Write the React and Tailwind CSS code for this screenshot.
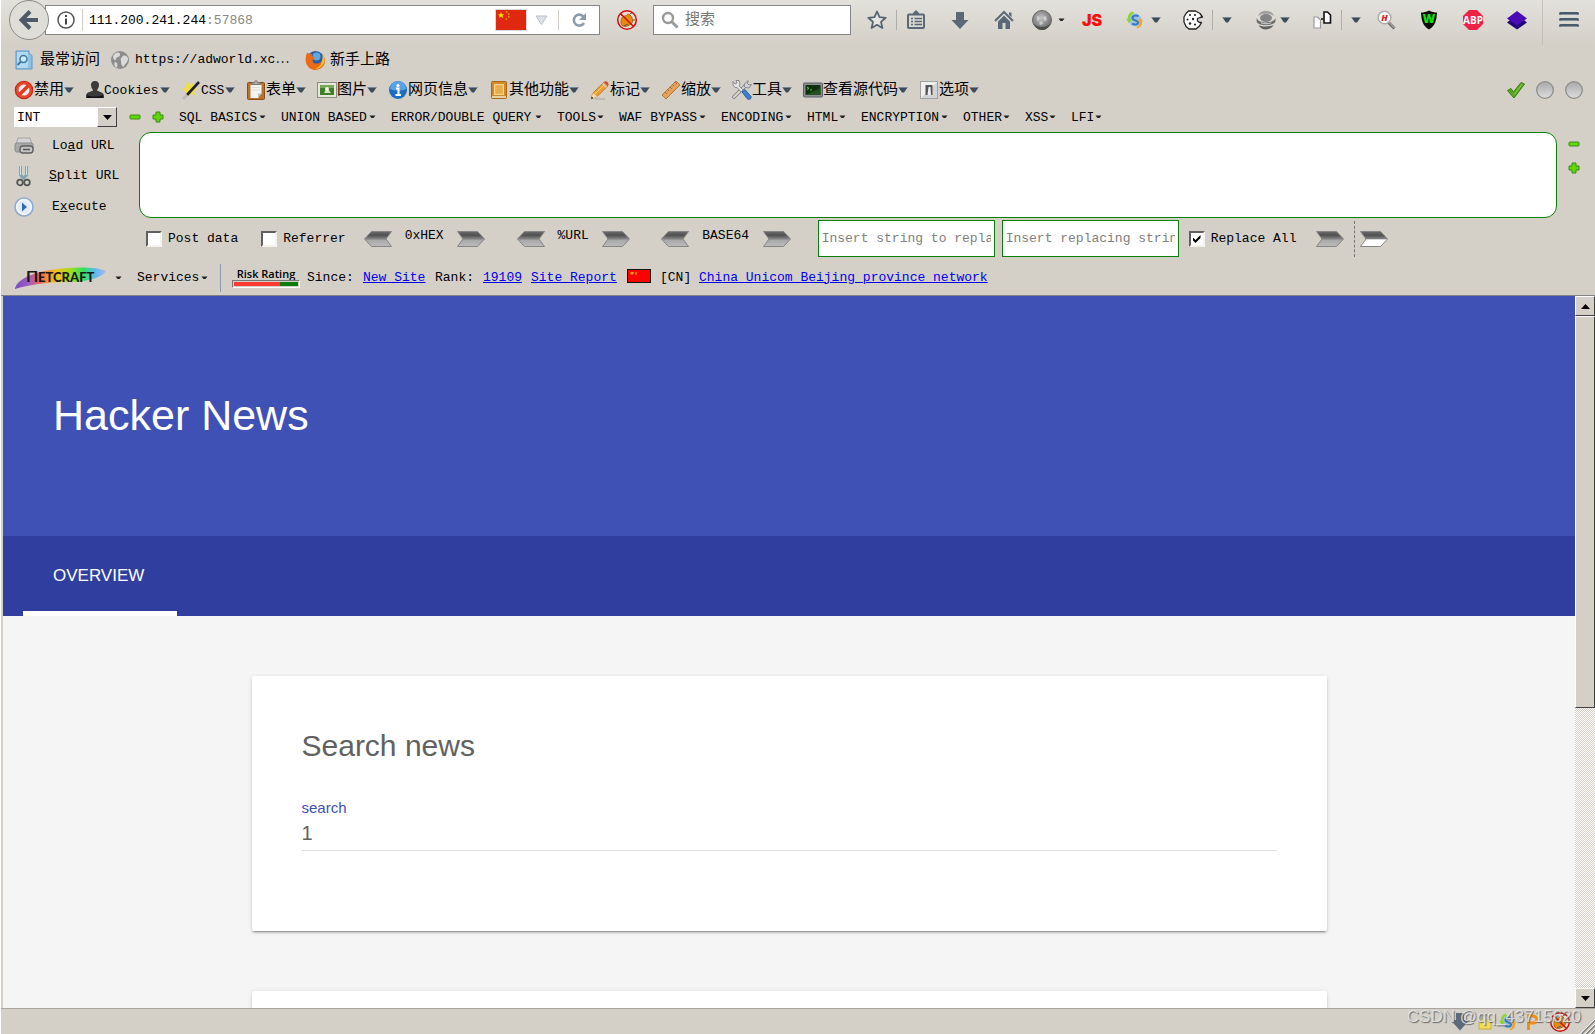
import React from "react";

/* ---------- small shared glyphs ---------- */

const Caret = ({ className = "" }) => (
  <svg className={`shrink-0 ${className}`} width="10" height="6" viewBox="0 0 10 6" aria-hidden="true">
    <path d="M0.5 0.5h9L6 5.5H4z" fill="#3d4b5a" />
    <path d="M0.5 0.5h9" stroke="#7b8794" strokeWidth="1" />
  </svg>
);

const TinyCaret = ({ className = "" }) => (
  <svg className={`shrink-0 ${className}`} width="7" height="4" viewBox="0 0 7 4" aria-hidden="true">
    <path d="M0.5 0.5h6L4.5 3h-2z" fill="#222" />
  </svg>
);

const Minus = () => (
  <svg width="12" height="12" viewBox="0 0 12 12" aria-hidden="true">
    <rect x="1" y="4" width="10" height="4" rx="1" fill="#5ed80a" stroke="#3c8a12" />
  </svg>
);

const Plus = () => (
  <svg width="12" height="12" viewBox="0 0 12 12" aria-hidden="true">
    <path d="M4 1h4v3h3v4H8v3H4V8H1V4h3z" fill="#5ed80a" stroke="#3c8a12" strokeLinejoin="round" />
  </svg>
);

const Wedge = ({ left, pale }) => (
  <svg width="28" height="16" viewBox="0 0 28 16" aria-hidden="true">
    <defs>
      <linearGradient id="wedge" x1="0" y1="0" x2="0" y2="1">
        <stop offset="0" stopColor="#6c6c6c" />
        <stop offset="0.25" stopColor="#505050" />
        <stop offset="0.52" stopColor="#8a8a8a" />
        <stop offset="0.56" stopColor="#a8a8a8" />
        <stop offset="1" stopColor="#bcbcbc" />
      </linearGradient>
      <linearGradient id="wedgePale" x1="0" y1="0" x2="0" y2="1">
        <stop offset="0" stopColor="#6c6c6c" />
        <stop offset="0.25" stopColor="#505050" />
        <stop offset="0.52" stopColor="#8a8a8a" />
        <stop offset="0.54" stopColor="#ffffff" />
        <stop offset="1" stopColor="#ffffff" />
      </linearGradient>
    </defs>
    <path
      d={left ? "M27.5 0.5H7.5L0.5 8l7 7.5h20L22 8z" : "M0.5 0.5h20L27.5 8l-7 7.5h-20L6 8z"}
      fill={pale ? "url(#wedgePale)" : "url(#wedge)"}
      stroke="#858585"
    />
  </svg>
);

const NoBug = () => (
  <svg width="22" height="22" viewBox="0 0 22 22" aria-hidden="true">
    <circle cx="11" cy="11" r="9.3" fill="#e4dcd0" />
    <path d="M6 9c1-3 4-1 5-3s4 0 5 3 1 4-1 6-6 3-8 2-3-5-1-8z" fill="#e88a12" stroke="#a8660e" />
    <path d="M14 5l3-2M6 7L4 5M17 11h2M8 17l4-2" stroke="#555" />
    <circle cx="11" cy="11" r="9.3" fill="none" stroke="#cf1010" strokeWidth="1.5" />
    <path d="M4.5 4.5l13 13" stroke="#cf1010" strokeWidth="1.5" />
  </svg>
);

const SwirlIcon = () => (
  <svg width="20" height="20" viewBox="0 0 20 20" aria-hidden="true">
    <circle cx="10" cy="10" r="6.5" fill="#9cc4e8" />
    <path d="M13.5 6.5C11 4.5 7 6 7.5 8.5s5.5 1.5 5.5 4-4 2.5-6 1" fill="none" stroke="#3a78b8" strokeWidth="2" />
    <path d="M8 1.5C4 2.5 2.5 5 3 9L1 8l2.5 5L7 10 5 9.500C5 6 6 4.500 9 3.500z" fill="#8ed62a" />
    <path d="M12 18.5c4-1 5.500-3.500 5-7.500l1.500 1L16 8l-3.500 3 2 .5c0 3-.5 4.500-3 5.500z" fill="#f2a52c" />
  </svg>
);

/* ---------- navigation toolbar icons ---------- */

const slate = "#5a6878";

const StarIcon = () => (
  <svg width="20" height="20" viewBox="0 0 20 20" aria-hidden="true">
    <path d="M10 1.5l2.500 5.700 6.200.6-4.700 4.100 1.400 6.100L10 14.800 4.600 18 6 11.900 1.300 7.800l6.200-.6z" fill="#e6e4df" stroke="#566474" strokeWidth="1.8" strokeLinejoin="round" />
  </svg>
);
const ListIcon = () => (
  <svg width="20" height="20" viewBox="0 0 20 20" aria-hidden="true">
    <path d="M10 0l3 3v2H7V3z" fill={slate} />
    <rect x="2" y="4.5" width="16" height="13.5" rx="1" fill="none" stroke={slate} strokeWidth="2" />
    <path d="M5 8.5h2M8.5 8.5H16M5 11.5h2M8.5 11.5H16M5 14.5h2M8.5 14.5H16" stroke={slate} strokeWidth="1.6" />
  </svg>
);
const DownIcon = () => (
  <svg width="20" height="20" viewBox="0 0 20 20" aria-hidden="true">
    <path d="M6 2h8v8h4.5L10 19 1.5 10H6z" fill={slate} />
  </svg>
);
const HomeIcon = () => (
  <svg width="20" height="20" viewBox="0 0 20 20" aria-hidden="true">
    <path d="M1 11l9-9 9 9" fill="none" stroke={slate} strokeWidth="2" />
    <path d="M15 2.5h2.5V7L15 5zM4 11.5l6-6 6 6V19h-4.5v-6h-3v6H4z" fill={slate} />
  </svg>
);
const GlobeIcon = () => (
  <svg width="20" height="20" viewBox="0 0 20 20" aria-hidden="true">
    <defs>
      <radialGradient id="orb" cx="0.45" cy="0.4" r="0.6">
        <stop offset="0" stopColor="#c4c4c4" /><stop offset="1" stopColor="#6a6a6a" />
      </radialGradient>
    </defs>
    <circle cx="10" cy="10" r="9.5" fill="url(#orb)" stroke="#6a6a6a" />
    <path d="M5 6l3 1-1 3-2 1zM11 7l3-1 1 4-3 1zM7 12l3-1 1 3-3 1z" fill="#d6d6d6" opacity="0.8" />
    <path d="M2 14c4 4 12 4 16 0-3 8-13 8-16 0z" fill="#4e4e4e" />
  </svg>
);
const JsIcon = () => (
  <svg width="22" height="20" viewBox="0 0 22 20" aria-hidden="true">
    <text x="11" y="16" textAnchor="middle" fontFamily="Inter, sans-serif" fontWeight="900" fontSize="16" fill="#fa0d0d">JS</text>
  </svg>
);
const CookieIcon = () => (
  <svg width="20" height="20" viewBox="0 0 20 20" aria-hidden="true">
    <path d="M5.5 1h7L17 3.5l2.5 3.5-2.5.5-2.5 1 0 2.5 2 1.5 2 0-2 3.5L13 19H6l-3-2.5L1 12V7l2-3.5z" fill="#fff" stroke="#222" strokeWidth="1.3" strokeLinejoin="round" />
    <g fill="#222">
      <circle cx="7" cy="5" r="1.1" /><circle cx="12" cy="5" r="1.1" /><circle cx="4.5" cy="9.5" r="1" />
      <circle cx="10" cy="9" r="1.2" /><circle cx="7" cy="13.5" r="1.2" />
      <circle cx="12" cy="14.5" r="1.1" />
    </g>
  </svg>
);
const SphereIcon = () => (
  <svg width="20" height="20" viewBox="0 0 20 20" aria-hidden="true">
    <path d="M2 6C4-1 16-1 18 6c-4-3-12-3-16 0z" fill="#a2a2a2" />
    <ellipse cx="10" cy="8" rx="6" ry="4" fill="#858585" />
    <path d="M0.5 8c2 6 17 6 19 0 0 3 0 4-1 5-4 3-13 3-17 0-1-1-1-2-1-5z" fill="#6e6e6e" />
    <path d="M2.5 15c4 2 11 2 15 0-3 6-12 6-15 0z" fill="#5f5f5f" />
    <path d="M5 12.7c3 1.5 7 1.5 10 0" stroke="#d5d5d5" fill="none" />
  </svg>
);
const PagesIcon = () => (
  <svg width="20" height="20" viewBox="0 0 20 20" aria-hidden="true">
    <path d="M2 7h3.5L8.5 10v8H2z" fill="#fff" stroke="#9a9a9a" strokeWidth="1.2" />
    <path d="M12 2h3.5L18.5 5v8H12z" fill="#fff" stroke="#111" strokeWidth="1.6" />
    <path d="M9 9h2.5" stroke="#111" strokeWidth="1.5" />
  </svg>
);
const HSearchIcon = () => (
  <svg width="20" height="20" viewBox="0 0 20 20" aria-hidden="true">
    <path d="M11 12l6.5 6.5" stroke="#6a6a6a" strokeWidth="3" />
    <path d="M12 12.5l5.5 5.5" stroke="#c8c8c8" />
    <circle cx="7.5" cy="7.5" r="6.3" fill="#fff" stroke="#aaa" strokeWidth="1.5" />
    <text x="7.5" y="11" textAnchor="middle" fontFamily="Open Sans, sans-serif" fontWeight="800" fontStyle="italic" fontSize="9" fill="#e02626">H</text>
  </svg>
);
const ShieldIcon = () => (
  <svg width="20" height="20" viewBox="0 0 20 20" aria-hidden="true">
    <path d="M10 0.5c3 1.5 5 2 8 2-.5 8-1.5 13-8 17-6.5-4-7.5-9-8-17 3 0 5-.5 8-2z" fill="#0b0b0b" />
    <text x="10" y="13" textAnchor="middle" fontFamily="Open Sans, sans-serif" fontWeight="800" fontSize="12" fill="#0be80b">W</text>
  </svg>
);
const AbpIcon = () => (
  <svg width="20" height="20" viewBox="0 0 20 20" aria-hidden="true">
    <path d="M6 0h8l6 6v8l-6 6H6l-6-6V6z" fill="#ee2246" />
    <text x="10" y="14" textAnchor="middle" fontFamily="Open Sans, sans-serif" fontWeight="700" fontSize="10" fill="#fff">ABP</text>
  </svg>
);
const LayersIcon = () => (
  <svg width="20" height="20" viewBox="0 0 20 20" aria-hidden="true">
    <path d="M0 12.5l3-2.5h14l3 2.5L10 19.5z" fill="#24057a" />
    <path d="M10 1l10 7.5L10 15.5 0 8.5z" fill="#4a0cb4" />
  </svg>
);
const MenuIcon = () => (
  <svg width="20" height="20" viewBox="0 0 20 20" aria-hidden="true">
    <path d="M1.5 3.5h17M1.5 9.5h17M1.5 15.5h17" stroke="#4b5a6a" strokeWidth="3" strokeLinecap="round" />
    <path d="M1.5 4.5h17M1.5 10.5h17M1.5 16.5h17" stroke="#8593a2" strokeWidth="1" />
  </svg>
);

const Sep = ({ className = "" }) => <span className={`h-5 w-px shrink-0 bg-[#b0ada7] ${className}`} />;

const navItems = [
  { label: "Bookmark", icon: <StarIcon />, gap: "ml-4" },
  { sep: true, gap: "ml-[9px]" },
  { label: "Library", icon: <ListIcon />, gap: "ml-[9px]" },
  { label: "Downloads", icon: <DownIcon />, gap: "ml-6" },
  { label: "Home", icon: <HomeIcon />, gap: "ml-6" },
  { label: "Proxy", icon: <GlobeIcon />, gap: "ml-[18px]" },
  { label: "Proxy menu", icon: <TinyCaret />, gap: "ml-[6px]" },
  { label: "JavaScript", icon: <JsIcon />, gap: "ml-4" },
  { label: "Sync", icon: <SwirlIcon />, gap: "ml-[22px]" },
  { label: "Sync menu", icon: <Caret />, gap: "ml-[6px]" },
  { label: "Cookies manager", icon: <CookieIcon />, gap: "ml-[22px]" },
  { sep: true, gap: "ml-[9px]" },
  { label: "Cookies manager menu", icon: <Caret />, gap: "ml-[9px]" },
  { label: "Agent", icon: <SphereIcon />, gap: "ml-6" },
  { label: "Agent menu", icon: <Caret />, gap: "ml-1" },
  { label: "Pages", icon: <PagesIcon />, gap: "ml-[22px]" },
  { sep: true, gap: "ml-[9px]" },
  { label: "Pages menu", icon: <Caret />, gap: "ml-[9px]" },
  { label: "Header search", icon: <HSearchIcon />, gap: "ml-4" },
  { label: "Wappalyzer", icon: <ShieldIcon />, gap: "ml-[22px]" },
  { label: "Adblock Plus", icon: <AbpIcon />, gap: "ml-6" },
  { label: "Layers", icon: <LayersIcon />, gap: "ml-6" },
];

const CnFlag = () => (
  <svg className="shrink-0" width="32" height="22" viewBox="0 0 32 22" role="img" aria-label="China">
    <rect x="0.5" y="0.5" width="31" height="21" fill="#de2910" stroke="#d8d8d8" />
    <path d="M6 3l.9 2.2 2.3.1-1.8 1.5.6 2.3L6 7.8 4 9.1l.6-2.3L2.8 5.3l2.3-.1z" fill="#ffde00" />
    <path d="M11 2.5l1.5 1M13 5l1.5.5M13 8l1.5-.5M11 9.5l1 1" stroke="#e89a08" strokeWidth="1.5" />
  </svg>
);

function NavBar() {
  return (
    <div className="flex h-[45px] items-center bg-linear-to-b from-[#e3e1dc] to-[#d4d0c8] pr-4 pb-[5px] pl-2">
      <button aria-label="Back" className="z-10 flex size-10 shrink-0 items-center justify-center rounded-full border border-[#8a8a86] bg-[#dfddd8]">
        <svg width="20" height="20" viewBox="0 0 20 20" aria-hidden="true">
          <path d="M11 1.5L2.5 10l8.5 8.5M3 10h16" fill="none" stroke="#4d5a68" strokeWidth="4" />
        </svg>
      </button>
      <div className="-ml-1 flex h-[30px] min-w-0 flex-1 items-center border border-[#86868a] bg-white pr-3 pl-[11px]">
        <svg className="shrink-0" width="18" height="18" viewBox="0 0 18 18" aria-hidden="true">
          <circle cx="9" cy="9" r="8" fill="none" stroke="#555" strokeWidth="1.5" />
          <path d="M9 7.5v6M9 4v2" stroke="#444" strokeWidth="2" />
        </svg>
        <span className="ml-[7px] h-[22px] w-px shrink-0 bg-[#cfccc6]" />
        <div className="ml-[6px] min-w-0 flex-1 pt-px">
          111.200.241.244<span className="text-[#888]">:57868</span>
        </div>
        <CnFlag />
        <svg className="ml-2 shrink-0" width="13" height="11" viewBox="0 0 13 11" aria-hidden="true">
          <path d="M1 1h11L6.5 9.5z" fill="#dde3e8" stroke="#b9c0c8" />
        </svg>
        <span className="ml-[10px] h-5 w-px shrink-0 bg-[#cfccc6]" />
        <button aria-label="Reload" className="ml-3">
          <svg width="16" height="16" viewBox="0 0 16 16" aria-hidden="true">
            <path d="M12.5 4.5A5.5 5.5 0 1 0 13 11" fill="none" stroke="#8d9cab" strokeWidth="2.6" />
            <path d="M15 1v7H8z" fill="#8d9cab" />
          </svg>
        </button>
      </div>
      <button aria-label="Block" className="ml-4 shrink-0"><NoBug /></button>
      <label className="ml-[15px] flex h-[30px] w-[198px] shrink-0 items-center border border-[#86868a] bg-white pl-[7px]">
        <svg className="shrink-0" width="18" height="18" viewBox="0 0 18 18" aria-hidden="true">
          <circle cx="7" cy="7" r="5" fill="none" stroke="#9a9a9a" strokeWidth="2.4" />
          <path d="M10.5 10.5l6 6" stroke="#9a9a9a" strokeWidth="3" />
        </svg>
        <input aria-label="搜索" placeholder="搜索" className="ml-[6px] w-full min-w-0 pt-[2px] text-[15px] outline-none placeholder:text-[#777]" />
      </label>
      {navItems.map((item, i) =>
        item.sep ? (
          <Sep key={i} className={item.gap} />
        ) : (
          <button key={i} aria-label={item.label} className={`shrink-0 ${item.gap}`}>{item.icon}</button>
        )
      )}
      <span className="-mb-[5px] ml-[15px] h-[45px] w-px shrink-0 bg-[#c4c0b8]" />
      <button aria-label="Menu" className="ml-4 shrink-0"><MenuIcon /></button>
    </div>
  );
}

/* ---------- bookmarks ---------- */

function Bookmarks() {
  return (
    <div className="flex h-[30px] items-center pl-[13px]">
      <a href="#most" className="flex items-center">
        <svg width="20" height="20" viewBox="0 0 20 20" aria-hidden="true">
          <path d="M2 1h13v2.5l3 2V19H2z" fill="#8ec2e6" stroke="#5a9aca" />
          <path d="M3 2h11v16H3z" fill="#b4daf2" />
          <circle cx="9.5" cy="9" r="3.5" fill="#cfe8f8" stroke="#3c78aa" strokeWidth="1.5" />
          <path d="M7 11.5L3.5 15" stroke="#3c78aa" strokeWidth="2" />
        </svg>
        <span className="ml-[6px] w-[60px] pt-[2px] text-[15px]">最常访问</span>
      </a>
      <a href="#adworld" className="ml-[10px] flex items-center">
        <svg width="20" height="20" viewBox="0 0 20 20" aria-hidden="true">
          <circle cx="10" cy="10" r="9" fill="#8c8c8c" />
          <path d="M3 6c3-5 8-4 7-1s-3 1-4 4-3 0-3-3zM12 7c2-3 6-1 6 2s-3 5-4 7-3-1-3-4-1-3 1-5zM5 12c2 0 3 3 2 5s-4-3-2-5z" fill="#d9d9d9" />
        </svg>
        <span className="ml-[5px] w-[159px] whitespace-nowrap">https://adworld.xc⋯</span>
      </a>
      <a href="#start" className="ml-[10px] flex items-center">
        <svg width="22" height="20" viewBox="0 0 22 20" aria-hidden="true">
          <circle cx="11.5" cy="10" r="9" fill="#2a5ca8" />
          <circle cx="12.5" cy="6.5" r="4" fill="#5fa8dc" />
          <path d="M3 2.5c1 1.5 3 1 5 1.5-1 2 1 3 3 4-2 1-3 2-2 4s5 2 8 0c2-2 2.5-4 2-7 2 3 3 8 0 11.5-4 4.5-12 4.5-15 0-3-3-3-9-1-14z" fill="#ea6a15" />
          <path d="M18.5 4c3 4 2.5 9-.5 12-2 2-4 3-7 3 6-2 8-8 7.5-15z" fill="#f8c22c" />
        </svg>
        <span className="ml-1 pt-[2px] text-[15px]">新手上路</span>
      </a>
    </div>
  );
}

/* ---------- developer toolbar ---------- */

const BanIcon = () => (
  <svg width="20" height="20" viewBox="0 0 20 20" aria-hidden="true">
    <circle cx="10" cy="10" r="9.3" fill="#c82a16" />
    <circle cx="10" cy="10" r="8" fill="#e8482e" />
    <circle cx="10" cy="10" r="5.5" fill="#f4ece8" />
    <path d="M5.5 14.5l9-9" stroke="#dd3c22" strokeWidth="3.5" />
  </svg>
);
const PersonIcon = () => (
  <svg width="19" height="20" viewBox="0 0 19 20" aria-hidden="true">
    <path d="M10 1c3 0 4 2 4 4s-1 4-2 5c0 2 7 1 7 6v2H1v-2c0-5 7-4 7-6C7 9 6 7 6 5s1-4 4-4z" fill="#3a3a3a" />
    <path d="M2 15c4 2 12 2 16 0v3H2z" fill="#111" />
  </svg>
);
const WandIcon = () => (
  <svg width="20" height="20" viewBox="0 0 20 20" aria-hidden="true">
    <path d="M6 1l3 4 4-3 0 5 4 2-4 2 1 4-5-1-4 3V12L1 9l4-2z" fill="#f2de3a" opacity="0.9" />
    <path d="M6 15L18 2" stroke="#222" strokeWidth="2.6" />
    <path d="M2 19l4-4" stroke="#bbb" strokeWidth="2.6" />
  </svg>
);
const ClipIcon = () => (
  <svg width="20" height="20" viewBox="0 0 20 20" aria-hidden="true">
    <rect x="1.5" y="2.5" width="17" height="17" rx="1" fill="#b8722a" stroke="#8a4f16" />
    <path d="M4.5 4.5h11v9L12 18H4.5z" fill="#f4f4f0" />
    <path d="M15.5 13.5L12 18v-4.5z" fill="#bdbdb5" />
    <path d="M5.5 4.5l1-2h2C9 0 11 0 11.5 2.5h2l1 2z" fill="#aaa" stroke="#777" />
    <path d="M6 7.5h8M6 10h8" stroke="#ddd" />
  </svg>
);
const ImageIcon = () => (
  <svg width="20" height="20" viewBox="0 0 20 20" aria-hidden="true">
    <rect x="0.5" y="2.5" width="19" height="15" fill="#e6e8dc" stroke="#8a8f80" />
    <rect x="3" y="5" width="14" height="10" fill="#3f7f2c" />
    <path d="M3 5h14v3H3z" fill="#76a85c" />
    <path d="M7 13l3-5 4 5z" fill="#d8e8b8" /><circle cx="10" cy="9" r="2" fill="#f4f4dc" />
  </svg>
);
const InfoIcon = () => (
  <svg width="20" height="20" viewBox="0 0 20 20" aria-hidden="true">
    <circle cx="10" cy="10" r="9" fill="#1c6ec4" />
    <path d="M2 9a8 8 0 0 1 16 0c-5 2-11 2-16 0z" fill="#5aa2e6" />
    <circle cx="10" cy="5.5" r="1.6" fill="#fff" />
    <path d="M8 8.5h2.5V15M7.5 15h5.5" stroke="#fff" strokeWidth="2" fill="none" />
  </svg>
);
const BookIcon = () => (
  <svg width="20" height="20" viewBox="0 0 20 20" aria-hidden="true">
    <rect x="2.5" y="1.5" width="15" height="17" rx="1" fill="#d08a2c" stroke="#a8681a" />
    <path d="M3 17h14" stroke="#f4e8c8" strokeWidth="1.5" />
    <rect x="5.5" y="4.5" width="9" height="10" fill="#ecb552" stroke="#f6d692" />
    <path d="M7.5 7h5M7.5 9.5h5M7.5 12h5" stroke="#dfa040" />
  </svg>
);
const PencilIcon = () => (
  <svg width="20" height="20" viewBox="0 0 20 20" aria-hidden="true">
    <path d="M5 19h10" stroke="#b0a898" />
    <path d="M1 19l2-6L14 2l4 4L7 16.5z" fill="#f0a030" stroke="#b8701a" strokeWidth="0.8" />
    <path d="M1 19l2-6 4 3.5z" fill="#f4dcb4" /><path d="M1 19l.8-2.5 1.5 1.7z" fill="#222" />
    <path d="M14 2c2-2 6 1 4 4z" fill="#d84848" /><path d="M12.5 3.5l4 4" stroke="#ccc" strokeWidth="1.5" />
    <path d="M5 14l9-9" stroke="#fbd080" />
  </svg>
);
const RulerIcon = () => (
  <svg width="20" height="20" viewBox="0 0 20 20" aria-hidden="true">
    <path d="M1 15L15 1l4 4L5 19z" fill="#e0a25c" stroke="#b47838" />
    <path d="M4 12l2 2M6.5 9.5l1.5 1.5M9 7l2 2M11.5 4.5L13 6M14 2l2 2" stroke="#a86c30" />
  </svg>
);
const ToolsIcon = () => (
  <svg width="20" height="20" viewBox="0 0 20 20" aria-hidden="true">
    <path d="M2 17L14 5" stroke="#777" strokeWidth="3.6" strokeLinecap="round" />
    <path d="M2 17L14 5" stroke="#d2d6da" strokeWidth="2.2" strokeLinecap="round" />
    <path d="M13 3.5L16 0.5l-.5 3 1.5 1.5 2.5-.5-2.5 3.5-3.5-.5-1.5-1.5z" fill="#cfd3d7" stroke="#777" strokeWidth="0.8" />
    <path d="M1 5V1.5L3 4l2-1-1-2.5h3L8 4l-1 2 4 4-2 2-4-4.5-2 0z" fill="#e2e4e6" stroke="#777" strokeWidth="0.8" />
    <path d="M10 12l3-2.5 6 7c1 2-2 4-4 2z" fill="#3c80d4" stroke="#1c4e94" strokeWidth="0.8" />
  </svg>
);
const TermIcon = () => (
  <svg width="20" height="20" viewBox="0 0 20 20" aria-hidden="true">
    <rect x="0.5" y="3" width="19" height="14" rx="1" fill="#8c9094" stroke="#5c6064" />
    <rect x="2.5" y="5" width="15" height="10" fill="#12300f" />
    <path d="M2.5 15L17.5 8v7z" fill="#24521e" />
    <path d="M4 7l2 1.3L4 9.5M7 10h2" stroke="#58d040" fill="none" />
  </svg>
);
const SwitchIcon = () => (
  <svg width="20" height="20" viewBox="0 0 20 20" aria-hidden="true">
    <rect x="1.5" y="1.5" width="17" height="17" fill="#d4d4d4" stroke="#a2a2a2" />
    <path d="M2 2h16L2 18z" fill="#f0f0f0" />
    <path d="M6.5 15V5h7v10z" fill="#555" /><path d="M8.5 15L9.5 7h2l.5 8z" fill="#eee" />
  </svg>
);

const devItems = [
  { icon: <BanIcon />, label: "禁用", w: "w-[30px]" },
  { icon: <PersonIcon />, label: "Cookies", w: "w-14" },
  { icon: <WandIcon />, label: "CSS", w: "w-6" },
  { icon: <ClipIcon />, label: "表单", w: "w-[30px]" },
  { icon: <ImageIcon />, label: "图片", w: "w-[30px]" },
  { icon: <InfoIcon />, label: "网页信息", w: "w-[60px]" },
  { icon: <BookIcon />, label: "其他功能", w: "w-[60px]" },
  { icon: <PencilIcon />, label: "标记", w: "w-[30px]" },
  { icon: <RulerIcon />, label: "缩放", w: "w-[30px]" },
  { icon: <ToolsIcon />, label: "工具", w: "w-[30px]" },
  { icon: <TermIcon />, label: "查看源代码", w: "w-[75px]" },
  { icon: <SwitchIcon />, label: "选项", w: "w-[30px]" },
];

const Led = () => (
  <svg width="20" height="20" viewBox="0 0 20 20" aria-hidden="true">
    <defs>
      <linearGradient id="led" x1="0" y1="0" x2="0" y2="1">
        <stop offset="0" stopColor="#a8a8a8" /><stop offset="1" stopColor="#dedede" />
      </linearGradient>
    </defs>
    <circle cx="10" cy="10" r="8.3" fill="url(#led)" stroke="#8c8c8c" strokeWidth="1.3" />
  </svg>
);

function DevToolbar() {
  return (
    <div className="flex h-[30px] items-center gap-[11px] pr-[11px] pl-[13px]">
      {devItems.map((d) => (
        <button key={d.label} className="flex shrink-0 items-center">
          {d.icon}
          <span className={`text-left whitespace-nowrap ${d.w} ${/[a-z]/i.test(d.label) ? "pt-px" : "pt-[2px] text-[15px]"}`}>{d.label}</span>
          <Caret />
        </button>
      ))}
      <div className="ml-auto flex gap-[9px]">
        <svg width="20" height="20" viewBox="0 0 20 20" aria-hidden="true">
          <path d="M1.5 10.5l3.5-2 2.5 3.5L15 2.5l3.5 1.500L8 18z" fill="#5aa81c" stroke="#3a7a10" />
          <path d="M8 14.5L16.5 4" stroke="#8ccc50" />
        </svg>
        <Led />
        <Led />
      </div>
    </div>
  );
}

/* ---------- injection toolbar ---------- */

const hackMenus = [
  ["SQL BASICS", "w-20"],
  ["UNION BASED", "w-22"],
  ["ERROR/DOUBLE QUERY", "w-36"],
  ["TOOLS", "w-10"],
  ["WAF BYPASS", "w-20"],
  ["ENCODING", "w-16"],
  ["HTML", "w-8"],
  ["ENCRYPTION", "w-20"],
  ["OTHER", "w-10"],
  ["XSS", "w-6"],
  ["LFI", "w-6"],
];

const bevel = "border border-t-white border-l-white border-r-[#404040] border-b-[#404040] bg-[#d4d0c8]";

function CheckBox({ id, label, checked }) {
  return (
    <label htmlFor={id} className="flex items-center gap-[6px]">
      <span className="grid">
        <input
          id={id}
          type="checkbox"
          defaultChecked={checked}
          className="peer col-start-1 row-start-1 size-4 appearance-none border-2 border-t-[#606060] border-r-[#f4f2ee] border-b-[#f4f2ee] border-l-[#606060] bg-white"
        />
        <svg className="pointer-events-none invisible col-start-1 row-start-1 size-4 peer-checked:visible" viewBox="0 0 16 16" aria-hidden="true">
          <path d="M4 6.5v3l2.5 2.5L11.5 7V4L6.5 9z" fill="#000" />
        </svg>
      </span>
      <span className="whitespace-nowrap">{label}</span>
    </label>
  );
}

function Codec({ label, w, className }) {
  return (
    <div className={`flex items-center ${className}`}>
      <button aria-label={`Decode ${label}`}><Wedge left /></button>
      <span className={`mb-[6px] text-center whitespace-nowrap ${w}`}>{label}</span>
      <button aria-label={`Encode ${label}`}><Wedge /></button>
    </div>
  );
}

function HackBar() {
  return (
    <section>
      <div className="flex h-6 items-center pl-[13px]">
        <div className="grid w-[103px]">
          <select aria-label="Injection type" className="col-start-1 row-start-1 h-5 appearance-none bg-white pt-px pl-[3px] outline-none">
            <option>INT</option>
          </select>
          <span className={`pointer-events-none col-start-1 row-start-1 flex h-5 w-5 items-center justify-center justify-self-end ${bevel}`}>
            <svg width="9" height="5" viewBox="0 0 9 5" aria-hidden="true"><path d="M0 0h9L4.5 5z" /></svg>
          </span>
        </div>
        <button aria-label="Remove" className="ml-3"><Minus /></button>
        <button aria-label="Add" className="ml-[11px]"><Plus /></button>
        <nav className="ml-[15px] flex gap-[15px]">
          {hackMenus.map(([label, w]) => (
            <button key={label} className="flex items-center">
              <span className={`pt-px text-left whitespace-nowrap ${w}`}>{label}</span>
              <TinyCaret />
            </button>
          ))}
        </nav>
      </div>

      <div className="flex pt-[3px] pl-[13px]">
        <div className="flex h-[86px] w-[125px] shrink-0 flex-col">
          <button className="flex h-7 shrink-0 items-center">
            <svg width="20" height="20" viewBox="0 0 20 20" aria-hidden="true">
              <path d="M4 2h12l2 6H2z" fill="#d4d4d4" stroke="#a4a4a4" />
              <rect x="1" y="7" width="18" height="9" rx="2" fill="#a8a8a8" stroke="#8c8c8c" />
              <rect x="6" y="10" width="13" height="7" rx="3" fill="#c4c4c4" stroke="#5e5e5e" strokeWidth="1.3" />
              <path d="M9 13.5h7" stroke="#555" strokeWidth="1.5" />
            </svg>
            <span className="ml-[18px]">Lo<u>a</u>d URL</span>
          </button>
          <button className="flex h-8 shrink-0 items-center">
            <svg width="20" height="22" viewBox="0 0 20 22" aria-hidden="true">
              <path d="M6.5 1v9l3.5 4M12.5 1v9l-3.5 4" fill="none" stroke="#7fa4b4" strokeWidth="3" />
              <path d="M6.5 1v9M12.5 1v9" stroke="#cfe4ec" />
              <circle cx="6" cy="17.5" r="2.8" fill="none" stroke="#555" strokeWidth="1.8" />
              <circle cx="13" cy="17.5" r="2.8" fill="none" stroke="#555" strokeWidth="1.8" />
            </svg>
            <span className="ml-[15px]"><u>S</u>plit URL</span>
          </button>
          <button className="flex h-[30px] shrink-0 items-center">
            <svg width="20" height="20" viewBox="0 0 20 20" aria-hidden="true">
              <circle cx="10" cy="10" r="9" fill="#f4f8fc" stroke="#8eaad4" strokeWidth="1.6" />
              <circle cx="10" cy="10" r="6.5" fill="#e2ecf8" />
              <path d="M8 5.5v9l5-4.5z" fill="#2f6cb8" />
            </svg>
            <span className="ml-[18px]">E<u>x</u>ecute</span>
          </button>
        </div>
        <textarea aria-label="URL" className="h-[86px] min-w-0 flex-1 resize-none rounded-xl border border-[#0a800a] bg-white p-2 outline-none" />
        <div className="flex w-[38px] shrink-0 flex-col items-center gap-3 pt-[6px] pr-1">
          <button aria-label="Shrink"><Minus /></button>
          <button aria-label="Grow"><Plus /></button>
        </div>
      </div>

      <div className="flex items-center pt-[2px] pl-[145px]">
        <CheckBox id="post" label="Post data" />
        <div className="ml-[23px]"><CheckBox id="ref" label="Referrer" /></div>
        <Codec label="0xHEX" w="w-[65px]" className="ml-[18px]" />
        <Codec label="%URL" w="w-[57px]" className="ml-8" />
        <Codec label="BASE64" w="w-[74px]" className="ml-[31px]" />
        <input aria-label="String to replace" placeholder="Insert string to replace" className="ml-[27px] h-[37px] w-[177px] border border-[#0a800a] bg-white px-[3px] outline-none placeholder:text-[#808080]" />
        <input aria-label="Replacing string" placeholder="Insert replacing string" className="ml-[7px] h-[37px] w-[177px] border border-[#0a800a] bg-white px-[3px] outline-none placeholder:text-[#808080]" />
        <div className="ml-[10px]"><CheckBox id="all" label="Replace All" checked /></div>
        <button aria-label="Replace" className="ml-5"><Wedge /></button>
        <span className="mr-[5px] ml-[10px] h-[36px] border-l border-dashed border-[#777]" />
        <button aria-label="Replace and run"><Wedge pale /></button>
      </div>
    </section>
  );
}

/* ---------- site report toolbar ---------- */

const linkCls = "whitespace-nowrap text-[#0000ee] underline";

function NetcraftBar() {
  return (
    <div className="flex h-[39px] items-center border-b border-[#808080] pt-[3px] pl-[13px]">
      <button aria-label="Netcraft" className="flex items-center gap-2">
        <svg width="93" height="28" viewBox="0 0 93 28" aria-hidden="true">
          <defs>
            <linearGradient id="rainbow">
              <stop offset="0" stopColor="#7a4ec0" />
              <stop offset="0.15" stopColor="#a05ac0" />
              <stop offset="0.28" stopColor="#f06a50" />
              <stop offset="0.45" stopColor="#f2c020" />
              <stop offset="0.62" stopColor="#9ae020" />
              <stop offset="0.75" stopColor="#30e060" />
              <stop offset="0.88" stopColor="#60b8f0" />
              <stop offset="1" stopColor="#a8b8f0" />
            </linearGradient>
          </defs>
          <path d="M1 24C4 15 18 9 36 6s46-4 56 1c-5 8-22 11-40 11S14 21 1 25z" fill="url(#rainbow)" />
          <text x="12" y="18" fontFamily="Lato, sans-serif" fontWeight="700" fontSize="16" fill="#181818">Π</text>
          <text x="24" y="18" fontFamily="Lato, sans-serif" fontWeight="900" fontSize="13" fill="#181818">ETCRAFT</text>
        </svg>
        <TinyCaret />
      </button>
      <button className="ml-[15px] flex items-center">
        <span className="w-16 text-left">Services</span>
        <TinyCaret />
      </button>
      <span className="ml-3 h-7 w-px bg-[#8f96b0]" />
      <div className="ml-[11px] flex w-[68px] flex-col items-center">
        <span className="font-['Open_Sans',sans-serif] text-[11px] leading-3 font-semibold">Risk Rating</span>
        <span className="flex h-2 w-full border border-t-[#777] border-r-white border-b-white border-l-[#777] p-px">
          <span className="w-[72%] bg-[#fb3a34]" />
          <span className="flex-1 bg-[#0c7c0c]" />
        </span>
      </div>
      <span className="ml-[7px] w-12">Since:</span>
      <a href="#new" className={`ml-2 w-16 ${linkCls}`}>New Site</a>
      <span className="ml-2 w-10">Rank:</span>
      <a href="#rank" className={`ml-2 w-10 ${linkCls}`}>19109</a>
      <a href="#report" className={`ml-2 w-22 ${linkCls}`}>Site Report</a>
      <svg className="mb-1 ml-2" width="24" height="14" viewBox="0 0 24 14" role="img" aria-label="China">
        <rect x="0.5" y="0.5" width="23" height="13" fill="#fe0000" stroke="#111" />
        <path d="M3 4h4M5 3v3M9 3v3" stroke="#ffd000" />
      </svg>
      <span className="ml-[9px] w-8">[CN]</span>
      <a href="#network" className={`ml-[7px] ${linkCls}`}>China Unicom Beijing province network</a>
    </div>
  );
}

/* ---------- page ---------- */

const cardShadow = "shadow-[0_2px_2px_0_rgba(0,0,0,0.14),0_3px_1px_-2px_rgba(0,0,0,0.2),0_1px_5px_0_rgba(0,0,0,0.12)]";

function Page() {
  return (
    <main className="min-w-0 flex-1 overflow-hidden bg-[#f5f5f5] font-['Liberation_Sans',Arial,sans-serif]">
      <header className="flex h-60 items-center bg-[#3f51b5] px-[50px] pb-[2px]">
        <h1 className="text-[43px] leading-[60px] text-white">Hacker News</h1>
      </header>
      <nav className="flex h-20 bg-[#303f9f] px-5">
        <a href="#overview" className="flex w-[154px] items-center border-b-[5px] border-white px-[30px] pt-[5px] text-[17px] text-white">OVERVIEW</a>
      </nav>
      <div className="flex flex-col items-center gap-[60px] px-5 pt-[60px]">
        <section className={`h-[255px] w-full max-w-[1075px] rounded-xs bg-white px-[50px] pt-[50px] ${cardShadow}`}>
          <h2 className="text-[30px] leading-10 text-[#616161]">Search news</h2>
          <div className="pt-8">
            <label htmlFor="news-search" className="block text-[15px] leading-5 text-[#3f51b5]">search</label>
            <input id="news-search" defaultValue="1" className="block h-[33px] w-full border-b border-[#dedede] pb-[2px] text-[20px] text-[#616161] outline-none" />
          </div>
        </section>
        <section className={`h-[255px] w-full max-w-[1075px] rounded-xs bg-white ${cardShadow}`} />
      </div>
    </main>
  );
}

function ScrollBar() {
  return (
    <div className="flex w-5 shrink-0 flex-col bg-[repeating-conic-gradient(#ffffff_0_25%,#d4d0c8_0_50%)] bg-[length:2px_2px]">
      <button aria-label="Scroll up" className={`flex h-5 items-center justify-center ${bevel}`}>
        <svg width="9" height="5" viewBox="0 0 9 5" aria-hidden="true"><path d="M0 5h9L4.5 0z" /></svg>
      </button>
      <div className={`h-[55%] ${bevel}`} />
      <button aria-label="Scroll down" className={`mt-auto flex h-5 items-center justify-center ${bevel}`}>
        <svg width="9" height="5" viewBox="0 0 9 5" aria-hidden="true"><path d="M0 0h9L4.5 5z" /></svg>
      </button>
    </div>
  );
}

function StatusBar() {
  return (
    <footer className="relative flex h-[26px] items-center justify-end border-t border-[#a8a69e] bg-[#d4d0c8]">
      <svg width="20" height="20" viewBox="0 0 20 20" aria-hidden="true">
        <path d="M6 1h8v7h5.5L10 18.500 0.5 8H6z" fill="#5c6a7a" />
      </svg>
      <svg className="ml-2" width="14" height="18" viewBox="0 0 14 18" aria-hidden="true">
        <path d="M4 7V4c0-3 6-3 6 0v3" fill="none" stroke="#9a9a80" strokeWidth="1.5" />
        <rect x="1" y="7" width="12" height="9" fill="#f0dc58" stroke="#c4b03c" />
      </svg>
      <span className="ml-[6px]"><SwirlIcon /></span>
      <svg className="ml-2" width="14" height="20" viewBox="0 0 14 20" aria-hidden="true">
        <path d="M2.5 2v16" stroke="#f09010" strokeWidth="3" />
        <path d="M3 4h4c5 0 5 7 0 7H3" fill="none" stroke="#f09010" strokeWidth="3" />
      </svg>
      <span className="ml-[9px]"><NoBug /></span>
      <svg className="ml-[9px] self-end" width="15" height="17" viewBox="0 0 15 17" aria-hidden="true">
        <path d="M0 17L15 2M5 17L15 7M10 17l5-5" stroke="#fff" />
        <path d="M1 17.5L15.5 3M6 17.5L15.5 8M11 17.5l4.5-4.5" stroke="#808080" strokeWidth="1.5" />
      </svg>
      <span className="absolute -top-1 right-[14px] font-['Liberation_Sans',Arial,sans-serif] text-[17px] leading-6 whitespace-nowrap text-[#e4e4e4]/90 [text-shadow:1px_1px_1px_#666]">
        CSDN @qq_43715620
      </span>
    </footer>
  );
}

export default function App() {
  return (
    <div className="flex h-screen flex-col overflow-hidden border-l border-white bg-[#d4d0c8] font-['Liberation_Mono','Noto_Sans_CJK_SC',monospace] text-[13px] leading-5 text-black">
      <div className="shrink-0">
        <NavBar />
        <Bookmarks />
        <DevToolbar />
        <HackBar />
        <NetcraftBar />
      </div>
      <div className="flex min-h-0 flex-1 pl-[2px]">
        <Page />
        <ScrollBar />
      </div>
      <StatusBar />
    </div>
  );
}
